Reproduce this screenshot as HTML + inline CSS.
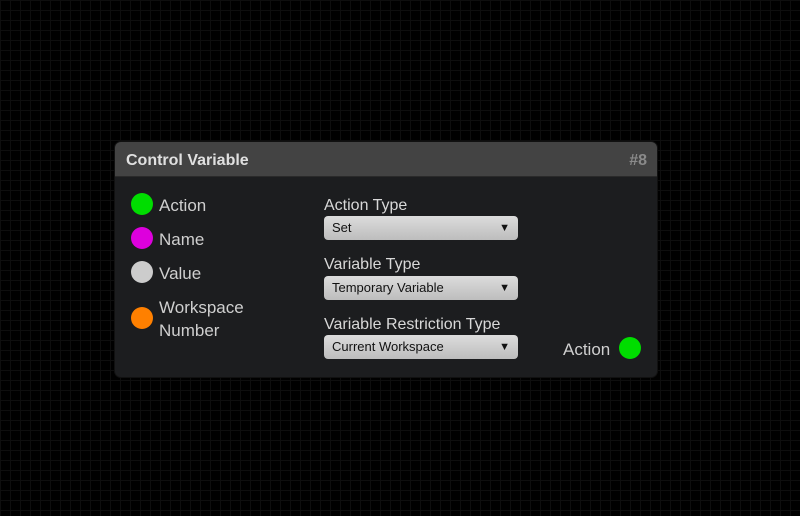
<!DOCTYPE html>
<html><head><meta charset="utf-8"><style>
html,body{margin:0;padding:0;}
body{width:800px;height:516px;overflow:hidden;background-color:#000;
background-image:linear-gradient(#0e0e0e 1px,transparent 1px),linear-gradient(90deg,#0e0e0e 1px,transparent 1px);
background-size:10px 10px;font-family:"Liberation Sans",sans-serif;position:relative;}
.node{position:absolute;left:115px;top:142px;width:542px;height:235px;background:#1c1d1f;border-radius:6px;box-shadow:0 0 0 1px #111;overflow:hidden;}
.hdr{height:34px;background:#434343;border-bottom:1px solid #2a2a2a;position:relative;}
.title{position:absolute;left:11px;top:10px;font-size:16px;font-weight:bold;color:#e0e0e0;}
.num{position:absolute;right:10px;top:10px;font-size:16px;font-weight:bold;color:#8a8a8a;}
.dot{position:absolute;width:22px;height:22px;border-radius:50%;}
.lbl{position:absolute;font-size:17px;color:#cfcfcf;line-height:23px;}
.sl{position:absolute;left:209px;font-size:16px;color:#d8d8d8;}
.sel{position:absolute;left:209px;width:194px;height:24px;border-radius:4px;background:linear-gradient(#dcdcdc,#bdbdbd);font-size:13px;color:#111;line-height:24px;box-sizing:border-box;padding-left:8px;}
.sel:after{content:"▼";position:absolute;right:8px;top:0;font-size:11px;}
</style></head><body>
<div class="node">
<div class="hdr"><div class="title">Control Variable</div><div class="num">#8</div></div>
<div class="dot" style="left:16px;top:51px;background:#00dd00"></div><div class="lbl" style="left:44px;top:52px">Action</div>
<div class="dot" style="left:16px;top:85px;background:#dd00dd"></div><div class="lbl" style="left:44px;top:86px">Name</div>
<div class="dot" style="left:16px;top:119px;background:#cccccc"></div><div class="lbl" style="left:44px;top:120px">Value</div>
<div class="dot" style="left:16px;top:165px;background:#ff8000"></div><div class="lbl" style="left:44px;top:154px">Workspace<br>Number</div>
<div class="sl" style="top:55px">Action Type</div>
<div class="sel" style="top:74px">Set</div>
<div class="sl" style="top:114px">Variable Type</div>
<div class="sel" style="top:134px">Temporary Variable</div>
<div class="sl" style="top:174px">Variable Restriction Type</div>
<div class="sel" style="top:193px">Current Workspace</div>
<div class="lbl" style="left:448px;top:196px">Action</div>
<div class="dot" style="left:504px;top:195px;background:#00dd00"></div>
</div>
</body></html>
